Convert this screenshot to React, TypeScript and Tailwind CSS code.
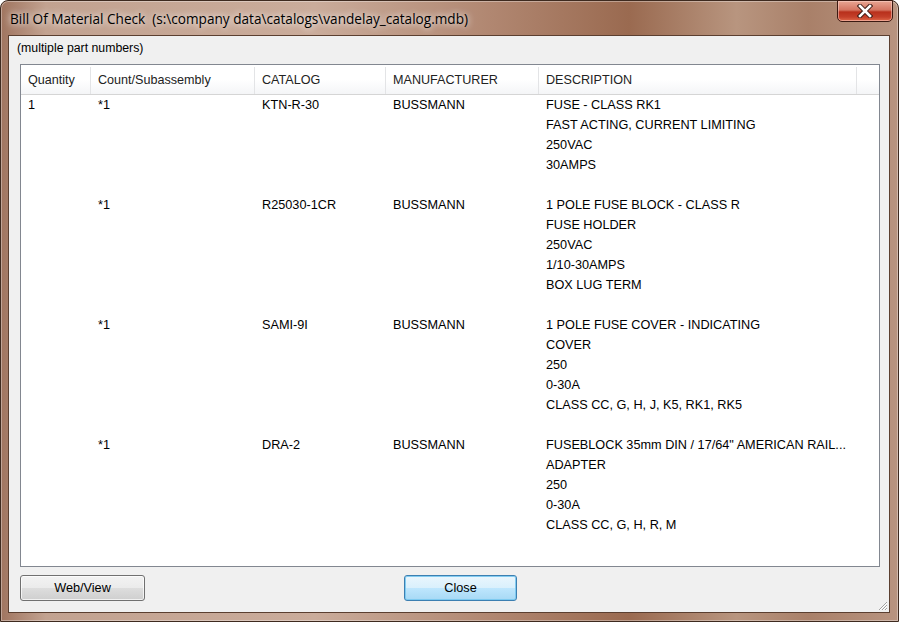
import React from "react";

const font = { fontFamily: '"Liberation Sans", Arial, sans-serif' };

type Row = { qty: string; count: string; catalog: string; mfr: string; desc: string[]; h: string };

const rows: Row[] = [
  { qty: "1", count: "*1", catalog: "KTN-R-30", mfr: "BUSSMANN", h: "h-[100px]", desc: ["FUSE - CLASS RK1", "FAST ACTING, CURRENT LIMITING", "250VAC", "30AMPS"] },
  { qty: "", count: "*1", catalog: "R25030-1CR", mfr: "BUSSMANN", h: "h-[120px]", desc: ["1 POLE FUSE BLOCK - CLASS R", "FUSE HOLDER", "250VAC", "1/10-30AMPS", "BOX LUG TERM"] },
  { qty: "", count: "*1", catalog: "SAMI-9I", mfr: "BUSSMANN", h: "h-[120px]", desc: ["1 POLE FUSE COVER - INDICATING", "COVER", "250", "0-30A", "CLASS CC, G, H, J, K5, RK1, RK5"] },
  { qty: "", count: "*1", catalog: "DRA-2", mfr: "BUSSMANN", h: "h-[120px]", desc: ["FUSEBLOCK 35mm DIN / 17/64\" AMERICAN RAIL...", "ADAPTER", "250", "0-30A", "CLASS CC, G, H, R, M"] },
];

export default function App() {
  return (
    <div className="w-[899px] h-[622px] overflow-hidden bg-white" style={font}>
      <div className="w-[899px] h-[622px] flex flex-col rounded-t-[8px] border border-[#3e2a1f] pl-[7px] pr-[8px] pb-[8px] bg-[linear-gradient(90deg,#a07560_0%,#c2a290_5%,#caac9b_35%,#b08670_55%,#9a6a50_70%,#b8957f_82%,#a98069_90%,#b89480_100%)] shadow-[inset_0_0_0_1px_rgba(255,255,255,0.35)]">
        {/* Title bar */}
        <div className="h-[34px] flex items-start justify-between shrink-0">
          <div className="pt-[9px] pl-[2px] text-[13.6px] leading-[18px] text-black whitespace-pre [text-shadow:0_0_6px_rgba(255,255,255,0.9),0_0_10px_rgba(255,255,255,0.6)]" style={{ fontFamily: '"Open Sans", "Liberation Sans", sans-serif' }}>
            {"Bill Of Material Check  (s:\\company data\\catalogs\\vandelay_catalog.mdb)"}
          </div>
          <div className="mr-[-3px] mt-[-1px] w-[56px] h-[22px] rounded-b-[5px] border border-[#3b1a12] bg-[linear-gradient(180deg,#e8a593_0%,#d47561_45%,#b8301c_55%,#c4402a_80%,#e06a4a_100%)] flex items-center justify-center shadow-[inset_0_0_0_1px_rgba(255,220,210,0.5)]">
            <svg width="16" height="14" viewBox="0 0 16 14">
              <path d="M3 2 L13 12 M13 2 L3 12" stroke="#3a1a14" strokeWidth="4.5" strokeLinecap="square" />
              <path d="M3 2 L13 12 M13 2 L3 12" stroke="#ffffff" strokeWidth="2.6" strokeLinecap="square" />
            </svg>
          </div>
        </div>

        {/* Client area */}
        <div className="flex-1 flex flex-col border border-[#5b3f30] bg-[#f0f0f0] relative">
          <div className="pt-[4px] pl-[8px] text-[12.3px] leading-[16px] text-black">(multiple part numbers)</div>

          <div className="mt-[8px] ml-[11px] w-[860px] h-[503px] border border-[#828790] bg-white flex flex-col overflow-hidden">
            {/* Header */}
            <div className="h-[30px] pt-[2px] flex shrink-0 border-b border-[#d5d5d5] bg-[linear-gradient(180deg,#ffffff_0%,#ffffff_50%,#f4f5f7_100%)] text-[12.6px] text-[#222]">
              <div className="w-[70px] px-[7px] flex items-center border-r border-[#e3e4e6]">Quantity</div>
              <div className="w-[164px] px-[7px] flex items-center border-r border-[#e3e4e6]">Count/Subassembly</div>
              <div className="w-[131px] px-[7px] flex items-center border-r border-[#e3e4e6]">CATALOG</div>
              <div className="w-[153px] px-[7px] flex items-center border-r border-[#e3e4e6]">MANUFACTURER</div>
              <div className="w-[318px] px-[7px] flex items-center border-r border-[#e3e4e6]">DESCRIPTION</div>
              <div className="flex-1" />
            </div>
            {/* Rows */}
            {rows.map((r, i) => (
              <div key={i} className={`${r.h} flex shrink-0 text-[12.7px] leading-[20px] text-black`}>
                <div className="w-[70px] px-[7px]">{r.qty}</div>
                <div className="w-[164px] px-[7px]">{r.count}</div>
                <div className="w-[131px] px-[7px]">{r.catalog}</div>
                <div className="w-[153px] px-[7px]">{r.mfr}</div>
                <div className="w-[318px] px-[7px] whitespace-nowrap">
                  {r.desc.map((d, j) => (
                    <div key={j}>{d}</div>
                  ))}
                </div>
              </div>
            ))}
          </div>

          {/* Buttons */}
          <div className="mt-[8px] flex text-[12.7px] text-black">
            <div className="ml-[11px] w-[125px] h-[26px] pt-[1px] rounded-[3px] border border-[#707070] bg-[linear-gradient(180deg,#f2f2f2_0%,#ebebeb_50%,#dddddd_51%,#cfcfcf_100%)] shadow-[inset_0_0_0_1px_rgba(255,255,255,0.7)] flex items-center justify-center">
              Web/View
            </div>
            <div className="ml-[259px] w-[113px] h-[26px] pt-[1px] rounded-[3px] border border-[#3c7fb1] bg-[linear-gradient(180deg,#eaf6fd_0%,#d9f0fc_50%,#bee6fd_51%,#a7d9f5_100%)] shadow-[inset_0_0_0_1px_rgba(120,200,240,0.9)] flex items-center justify-center">
              Close
            </div>
          </div>

          {/* resize grip */}
          <svg className="absolute right-[1px] bottom-[1px]" width="12" height="12" viewBox="0 0 12 12">
            <path d="M11 3 L3 11 M11 6 L6 11 M11 9 L9 11" stroke="#a0a0a0" strokeWidth="1" />
            <path d="M11 4 L4 11 M11 7 L7 11 M11 10 L10 11" stroke="#ffffff" strokeWidth="1" />
          </svg>
        </div>
      </div>
    </div>
  );
}
